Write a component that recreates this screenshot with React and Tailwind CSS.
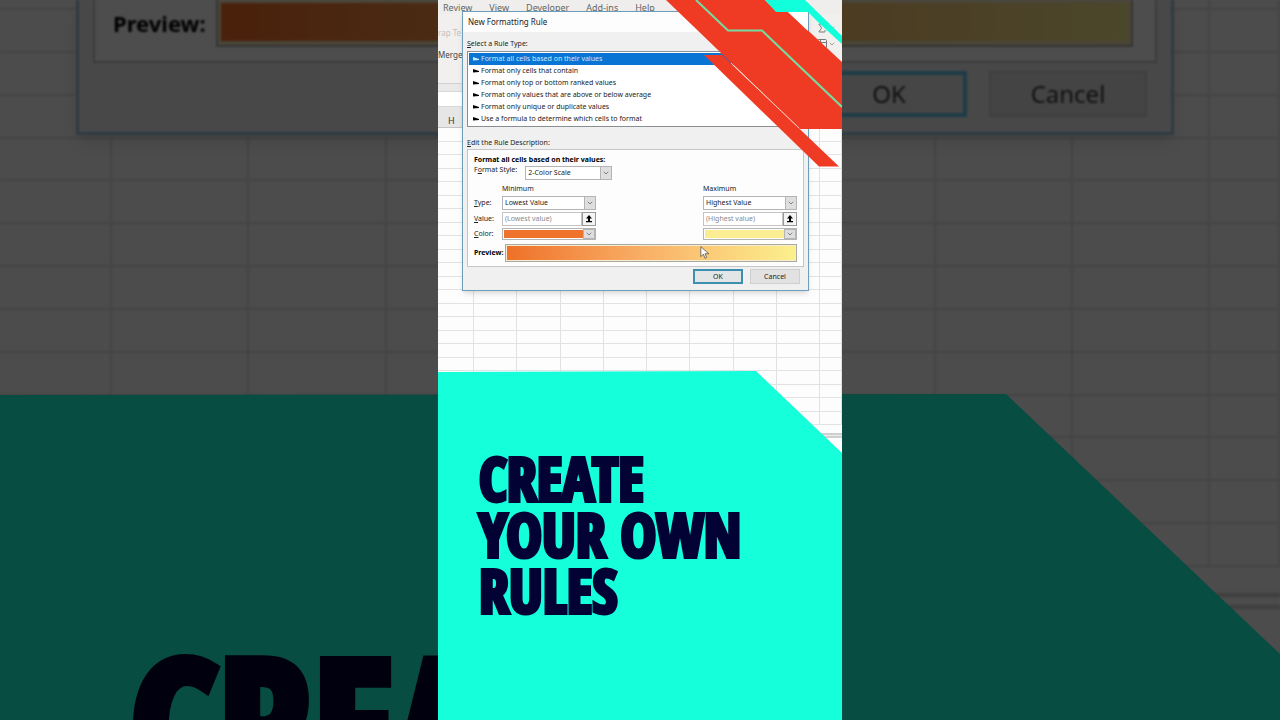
import React, { useState } from 'react';
import { ChevronDown, Sigma, Table2 } from 'lucide-react';

const RIBBON_TABS = ['Review', 'View', 'Developer', 'Add-ins', 'Help'];

const RULE_TYPES = [
  'Format all cells based on their values',
  'Format only cells that contain',
  'Format only top or bottom ranked values',
  'Format only values that are above or below average',
  'Format only unique or duplicate values',
  'Use a formula to determine which cells to format',
];

// First letter underlined, like a Windows access key
const Access = ({ text, at = 0 }) => (
  <>
    {text.slice(0, at)}
    <span className="underline">{text[at]}</span>
    {text.slice(at + 1)}
  </>
);

const Cells = ({ count, className, cellClassName }) => (
  <div aria-hidden="true" className={className}>
    {Array.from({ length: count }, (_, i) => (
      <div key={i} className={cellClassName} />
    ))}
  </div>
);

const Arrow = () => (
  <span className="absolute inset-y-0 right-0 w-3 flex items-center justify-center border border-[#b4b4b4] bg-[#dedede] pointer-events-none">
    <ChevronDown className="size-2 text-gray-600" />
  </span>
);

const Combo = ({ id, label, options, className }) => (
  <div className={`relative h-[14px] ${className}`}>
    <select
      id={id}
      aria-label={label}
      className="block w-full h-full appearance-none border border-[#b4b4b4] bg-white pl-[2px] pr-3 text-[7px] leading-[12px] text-[#222]"
    >
      {options.map((option) => (
        <option key={option}>{option}</option>
      ))}
    </select>
    <Arrow />
  </div>
);

const ValueField = ({ id, label, placeholder }) => (
  <div className="flex h-[14px]">
    <input
      id={id}
      aria-label={label}
      placeholder={placeholder}
      className="min-w-0 flex-1 border border-[#c4c4c4] bg-white px-[2px] text-[7px] leading-[12px] placeholder:text-[#8a8a8a]"
    />
    <button type="button" aria-label="Collapse dialog" className="w-[14px] flex items-center justify-center border border-[#9a9a9a] bg-[#f4f4f4]">
      <svg viewBox="0 0 8 8" className="size-2 fill-black">
        <path d="M4 0L7 3.5H5V6H7V7.2H1V6H3V3.5H1Z" />
      </svg>
    </button>
  </div>
);

const ColorField = ({ label, swatch }) => (
  <button type="button" aria-label={label} className="relative block w-full h-3 border border-[#b4b4b4] bg-white p-px">
    <span className={`block h-full ${swatch}`} />
    <Arrow />
  </button>
);

const Sheet = () => (
  <div className="absolute inset-0 flex flex-col bg-[#fdfdfd]">
    <nav className="flex h-[14px] gap-[17px] bg-[#efeeec] pl-[5px] text-[9px] leading-[16px] text-[#666]">
      {RIBBON_TABS.map((tab) => (
        <a key={tab} href="#ribbon">{tab}</a>
      ))}
    </nav>
    <div className="flex h-[70px] justify-between border-b border-[#d2d2d2] bg-[#f1f0ee] text-[8px] text-[#444]">
      <div className="flex flex-col gap-[10px] pt-[13px] leading-[12px] whitespace-nowrap">
        <span className="text-[#c4bfbc]">rap Te</span>
        <span>Merge &amp;</span>
      </div>
      <div className="flex flex-col gap-1 pt-2 pr-[6px] text-[#777]">
        <span className="flex items-center"><Sigma className="size-3" /><ChevronDown className="size-2" /></span>
        <span className="flex items-center"><Table2 className="size-3" /><ChevronDown className="size-2" /></span>
      </div>
    </div>
    <div className="h-[7px] bg-[#e9e9e9]" />
    <div className="h-4 border-y border-[#d8d8d8] bg-white" />
    <div className="h-[21px] border-b border-[#c4c4c4] bg-[#e6e6e6] pl-[10px] pt-1 text-[9px] leading-[20px] text-[#333]">H</div>
    <Cells
      count={220}
      className="grid h-[297px] grid-cols-[36px_repeat(8,1fr)_22px] grid-rows-[repeat(22,1fr)]"
      cellClassName="border-r border-b border-[#e2e2e2]"
    />
    <div className="mt-2 h-[5px] border-y-2 border-[#cfcfcf] bg-[#ececec]" />
  </div>
);

const RuleDialog = () => {
  const [selected, setSelected] = useState(0);

  return (
    <section
      aria-label="New Formatting Rule"
      className="absolute left-6 right-[33px] top-[11px] border border-[#6d9dbb] bg-[#f0f0f0] text-[7px] leading-[10px] text-[#222] shadow-md"
    >
      <h2 className="bg-[#fdfdfd] px-[5px] text-[8px] leading-[20px]">New Formatting Rule</h2>

      <div className="px-1 pt-[7px] pb-[6px]">
        <p><Access text="Select a Rule Type:" /></p>
        <ul className="mt-[2px] border border-[#8a8f94] bg-white p-px">
          {RULE_TYPES.map((rule, i) => (
            <li key={rule}>
              <button
                type="button"
                onClick={() => setSelected(i)}
                className={`flex w-full items-center gap-[2px] px-1 text-left leading-[12px] ${i === selected ? 'bg-[#0a74d4] text-[#cfe6fb]' : ''}`}
              >
                <svg viewBox="0 0 6 6" className={`size-[6px] ${i === selected ? 'fill-[#cfe6fb]' : 'fill-black'}`}>
                  <path d="M0 1L6 3V4L0 4.5Z" />
                </svg>
                {rule}
              </button>
            </li>
          ))}
        </ul>

        <p className="mt-[11px]"><Access text="Edit the Rule Description:" /></p>
        <div className="mt-px border border-[#c6c6c6] bg-[#fdfdfd] px-[6px] pt-[5px] pb-1">
          <p className="font-bold text-black">Format all cells based on their values:</p>
          <div className="flex items-start gap-2">
            <label htmlFor="format-style"><Access text="Format Style:" at={1} /></label>
            <Combo id="format-style" options={['2-Color Scale', '3-Color Scale', 'Data Bar', 'Icon Sets']} className="mt-px w-[87px]" />
          </div>

          <div className="mt-1 grid grid-cols-[22px_94px_1fr_94px] items-center gap-x-[6px] gap-y-[2px]">
            <span className="col-start-2">Minimum</span>
            <span className="col-start-4">Maximum</span>

            <label htmlFor="min-type"><Access text="Type:" /></label>
            <Combo id="min-type" options={['Lowest Value', 'Number', 'Percent']} />
            <span />
            <Combo id="max-type" label="Maximum type" options={['Highest Value', 'Number', 'Percent']} />

            <label htmlFor="min-value"><Access text="Value:" /></label>
            <ValueField id="min-value" placeholder="(Lowest value)" />
            <span />
            <ValueField id="max-value" label="Maximum value" placeholder="(Highest value)" />

            <span><Access text="Color:" /></span>
            <ColorField label="Minimum color" swatch="bg-[#f0732c]" />
            <span />
            <ColorField label="Maximum color" swatch="bg-[#fbee92]" />
          </div>

          <div className="mt-1 flex items-center gap-[2px]">
            <span className="font-bold text-black">Preview:</span>
            <div className="h-[18px] flex-1 border border-[#a9a9a0] bg-[#f7ecd0] p-px">
              <div className="h-full bg-linear-to-r from-[#ee7026] via-[#f9b269] to-[#fbf08d]" />
            </div>
          </div>
        </div>

        <div className="mt-[2px] flex justify-end gap-[7px] pr-1 text-center">
          <button type="button" className="w-[50px] border-2 border-[#3d8fb0] bg-[#e3e6e7] leading-[11px]">OK</button>
          <button type="button" className="w-[50px] border border-[#cfcfcf] bg-[#e2e2e2] leading-[13px]">Cancel</button>
        </div>
      </div>
    </section>
  );
};

const CornerRibbons = () => (
  <svg aria-hidden="true" viewBox="0 0 182 170" className="absolute right-0 top-0 w-[182px] h-[170px]">
    <path d="M105 0L116 11H127L182 62V129H140L6 0Z" fill="#f03b24" />
    <path d="M105 0H145L182 36V44L160 24L148 12H116Z" fill="#12ffdb" />
    <path d="M128 12H148V31Z" fill="#fdfdfd" />
    <path d="M44 55H62L179 166.500H159Z" fill="#f03b24" />
    <path d="M60 53L71 63" stroke="#a04a62" />
    <path d="M71 63L139 128" stroke="#fbd8d2" strokeWidth="0.800" />
    <path d="M36 0L68 30.500H102L182 107" fill="none" stroke="#74dca0" strokeWidth="2" />
  </svg>
);

// Dimmed, enlarged view of the clip that fills the room on both sides
const Backdrop = () => (
  <div aria-hidden="true" className="absolute inset-0 overflow-hidden bg-[#4c4c4c]">
    <div className="blur-[1px]">
      <Cells
        count={140}
        className="grid h-[567px] grid-cols-[112px_repeat(8,1fr)_70px] grid-rows-[10px_repeat(13,1fr)]"
        cellClassName="border-r-2 border-b-2 border-[#444444]"
      />
      <div className="mt-[26px] h-4 border-y-4 border-[#3f3f3f]" />
    </div>

    <div className="absolute left-[76px] right-[106px] top-0 border-x-[3px] border-b-[3px] border-[#2f3b43] bg-[#484848] px-[14px] pb-[15px] text-[#101010] shadow-lg blur-[1px]">
      <div className="flex items-start gap-[10px] border-x-2 border-b-2 border-[#3b3b3b] bg-[#4d4d4d] pl-[18px] pr-[22px] pb-[14px]">
        <span className="text-[22px] font-bold leading-[46px] text-black">Preview:</span>
        <div className="h-[47px] flex-1 border-x-2 border-b-2 border-[#343434] bg-[#4a4538] px-[3px] pb-1 pt-[3px]">
          <div className="h-full bg-linear-to-r from-[#4a210b] via-[#4b351d] to-[#4b472b]" />
        </div>
      </div>
      <div className="mt-2 flex justify-end gap-[22px] pr-[10px] text-center text-[24px]">
        <span className="w-[156px] border-4 border-[#1d3c47] bg-[#464646] leading-[38px]">OK</span>
        <span className="w-[158px] border-2 border-[#3e3e3e] bg-[#444444] leading-[42px]">Cancel</span>
      </div>
    </div>

    <div className="absolute inset-x-0 top-[394px] bottom-0 bg-[#074d41] [clip-path:polygon(0_1px,1006px_0,100%_260px,100%_100%,0_100%)]">
      <p className="pl-[130px] pt-[234px] font-['Open_Sans_Condensed','Roboto_Condensed',sans-serif] text-[190px] font-bold leading-[190px] text-[#00000f] [-webkit-text-stroke:10px_#00000f]">CREATE</p>
    </div>
  </div>
);

const App = () => (
  <div className="relative flex h-screen justify-center overflow-hidden bg-black font-['Noto_Sans','Open_Sans',sans-serif]">
    <Backdrop />
    <main className="relative h-full aspect-[101/180] overflow-hidden">
      <Sheet />
      <RuleDialog />
      <svg aria-hidden="true" viewBox="0 0 12 16" className="absolute left-[262px] top-[245px] h-[15px] w-[10px]">
        <path d="M1 1V13L4 10L6 15L8 14L6 9.500H10.500Z" fill="#fff" stroke="#555" />
      </svg>
      <CornerRibbons />
      <div className="absolute inset-x-0 bottom-0 top-[371px] bg-[#16ffdb] pl-[41px] pt-[79px] [clip-path:polygon(0_1px,318px_0,100%_82px,100%_100%,0_100%)]">
        <h1 className="font-['Open_Sans_Condensed','Roboto_Condensed',sans-serif] text-[60px] font-bold leading-[56px] text-[#020235] [-webkit-text-stroke:4px_#020235]">
          CREATE
          <br />
          YOUR OWN
          <br />
          RULES
        </h1>
      </div>
    </main>
  </div>
);

export default App;
